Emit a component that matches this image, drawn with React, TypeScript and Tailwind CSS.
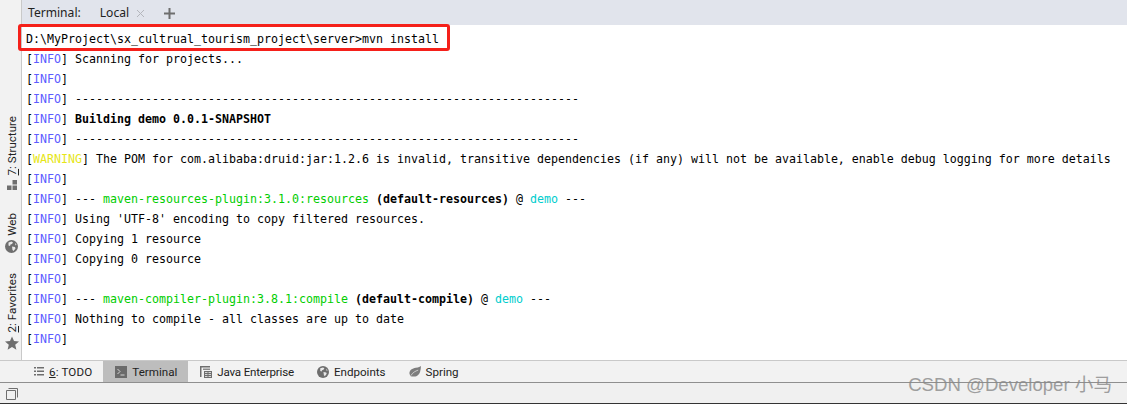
const mono = "font-['DejaVu_Sans_Mono',monospace] text-[11.63px]";
const head = "font-['Noto_Sans',sans-serif] text-[12.1px] text-[#222]";
const ui = "font-['Roboto',sans-serif] text-[11.6px] text-[#222]";

const Info = () => (
  <>
    <span className="text-black">[</span>
    <span className="text-[#5c5cff]">INFO</span>
    <span className="text-black">]</span>
  </>
);

const rule = '-'.repeat(72);

const lines: React.ReactNode[] = [
  <> Scanning for projects...</>,
  null,
  <> {rule}</>,
  <b> Building demo 0.0.1-SNAPSHOT</b>,
  <> {rule}</>,
  'warning',
  null,
  <>
    {' --- '}
    <span className="text-[#00cd00]">maven-resources-plugin:3.1.0:resources</span>
    {' '}
    <b>(default-resources)</b>
    {' @ '}
    <span className="text-[#00cdcd]">demo</span>
    {' ---'}
  </>,
  <> Using 'UTF-8' encoding to copy filtered resources.</>,
  <> Copying 1 resource</>,
  <> Copying 0 resource</>,
  null,
  <>
    {' --- '}
    <span className="text-[#00cd00]">maven-compiler-plugin:3.8.1:compile</span>
    {' '}
    <b>(default-compile)</b>
    {' @ '}
    <span className="text-[#00cdcd]">demo</span>
    {' ---'}
  </>,
  <> Nothing to compile - all classes are up to date</>,
  null,
];

function SideTab({ label, accel, icon, className = '' }: { label: string; accel: string; icon: React.ReactNode; className?: string }) {
  return (
    <div className={`flex flex-col-reverse items-center gap-[4px] ${className}`}>
      {icon}
      <span className={`${ui} [writing-mode:vertical-rl] rotate-180 leading-[14px] whitespace-nowrap`}>
        {accel && <span className="underline">{accel}</span>}
        {label}
      </span>
    </div>
  );
}

function StarIcon() {
  return (
    <svg width="14" height="14" viewBox="0 0 14 14" fill="#6e6e6e">
      <path d="M7 .5l2 4.6 5 .4-3.8 3.3 1.2 4.9L7 11.1l-4.4 2.6 1.2-4.9L0 5.5l5-.4z" />
    </svg>
  );
}

function GlobeIcon({ size }: { size: number }) {
  return (
    <svg width={size} height={size} viewBox="0 0 13 13">
      <circle cx="6.5" cy="6.5" r="6.5" fill="#6e6e6e" />
      <path d="M3.5 2.5l3-1 1.5 1-1 1.5-1.5.5-.5 1.5-1.5-.5zM7 6.5l3 .5.5 1.5-2 2.5-1-1zM10 3l1.5 1.5-1 1z" fill="#e8e8e8" />
    </svg>
  );
}

function StructureIcon() {
  return (
    <svg width="10" height="10" viewBox="0 0 10 10" fill="#6e6e6e">
      <rect x="5.5" y="0" width="4.5" height="4.5" />
      <rect x="0" y="5.5" width="4.5" height="4.5" />
      <rect x="5.5" y="5.5" width="4.5" height="4.5" />
    </svg>
  );
}

function TodoIcon() {
  return (
    <svg width="10" height="9" viewBox="0 0 10 9" fill="#6e6e6e">
      <rect x="0" y="0" width="2" height="1.5" />
      <rect x="3" y="0" width="7" height="1.5" />
      <rect x="0" y="3.5" width="2" height="1.5" />
      <rect x="3" y="3.5" width="7" height="1.5" />
      <rect x="0" y="7" width="2" height="1.5" />
      <rect x="3" y="7" width="7" height="1.5" />
    </svg>
  );
}

function TerminalIcon() {
  return (
    <svg width="12" height="12" viewBox="0 0 12 12">
      <rect width="12" height="12" fill="#6b6b6b" />
      <path d="M2.5 3l2.5 2.5L2.5 8" fill="none" stroke="#d5d5d5" />
      <path d="M5.5 9h4" stroke="#d5d5d5" />
    </svg>
  );
}

function JavaEEIcon() {
  return (
    <svg width="12" height="12" viewBox="0 0 12 12">
      <path d="M0 0h10v1.5H1.5V11H0z" fill="#6e6e6e" />
      <rect x="3" y="2.5" width="7" height="1.5" fill="#8a8a8a" />
      <rect x="4" y="5" width="8" height="7" fill="#6e6e6e" />
      <path d="M5 6.5h2.5M5 8.5h2.5M5 10.5h2.5M8.5 6.5h2.5M8.5 8.5h2.5M8.5 10.5h2.5" stroke="#f2f2f2" strokeWidth="0.8" />
    </svg>
  );
}

function SpringIcon() {
  return (
    <svg width="12" height="11" viewBox="0 0 13 12">
      <path d="M13 0c-1 1-2.5 1.5-5.5 1.8C3 2.3 0 5 .5 8.5c.2 1 .7 2 1.3 2.6C4 11.8 10 12.5 12 6.5 12.6 4.5 13 2 13 0z" fill="#7d7d7d" />
      <path d="M2 10.5C4 7 7 5.5 10 4.5" stroke="#f2f2f2" strokeWidth="0.7" fill="none" />
    </svg>
  );
}

function BottomTab({ icon, active, className = '', children }: { icon: React.ReactNode; active?: boolean; className?: string; children: React.ReactNode }) {
  return (
    <div className={`h-full flex items-center gap-[5px] pl-[12px] pr-[11px] ${active ? 'bg-[#bdbdbd]' : ''}`}>
      {icon}
      <span className={`${ui} pt-[3px] ${className}`}>{children}</span>
    </div>
  );
}

export default function App() {
  return (
    <div className="relative w-[1127px] h-[404px] overflow-hidden bg-white flex flex-col">
      <div className="flex-1 min-h-0 flex">
        {/* Left tool rail */}
        <div className="w-[22px] shrink-0 bg-[#f2f2f2] border-r border-[#c9c9c9] flex flex-col-reverse items-center pl-[2px] pb-[10px] gap-[20px]">
          <SideTab label=": Favorites" accel="2" icon={<StarIcon />} />
          <SideTab label="Web" accel="" icon={<GlobeIcon size={13} />} />
          <SideTab label=": Structure" accel="7" icon={<StructureIcon />} className="mb-[3px]" />
        </div>

        <div className="flex-1 min-w-0 flex flex-col">
          {/* Terminal header */}
          <div className="h-[25px] shrink-0 bg-[#e1e4ec] flex items-center pl-[6px] pt-[1px]">
            <span className={head}>Terminal:</span>
            <span className={`${head} ml-[19px]`}>Local</span>
            <svg className="ml-[7px]" width="9" height="9" viewBox="0 0 9 9" stroke="#b4b6bc" fill="none">
              <path d="M1 1l7 7M8 1l-7 7" />
            </svg>
            <svg className="ml-[19px]" width="11" height="11" viewBox="0 0 11 11" stroke="#6e6e6e" strokeWidth="2" fill="none">
              <path d="M5.5 0v11M0 5.5h11" />
            </svg>
          </div>

          {/* Terminal output */}
          <div className={`flex-1 min-h-0 pl-[4px] pt-[4px] ${mono} text-black whitespace-pre leading-[20px]`}>
            <div>D:\MyProject\sx_cultrual_tourism_project\server&gt;mvn install</div>
            {lines.map((line, i) =>
              line === 'warning' ? (
                <div key={i}>
                  [<span className="text-[#e6e619]">WARNING</span>] The POM for com.alibaba:druid:jar:1.2.6 is invalid, transitive dependencies (if any) will not be available, enable debug logging for more details
                </div>
              ) : (
                <div key={i}>
                  <Info />
                  {line}
                </div>
              )
            )}
          </div>
        </div>
      </div>

      {/* Tool window bar */}
      <div className="h-[22px] shrink-0 bg-[#f2f2f2] border-t border-[#c9c9c9] flex items-center pl-[22px]">
        <BottomTab icon={<TodoIcon />} className="tracking-[0.15px]">
          <span className="underline">6</span>: TODO
        </BottomTab>
        <BottomTab active icon={<TerminalIcon />}>Terminal</BottomTab>
        <BottomTab icon={<JavaEEIcon />} className="tracking-[-0.2px]">Java Enterprise</BottomTab>
        <BottomTab icon={<GlobeIcon size={12} />}>Endpoints</BottomTab>
        <BottomTab icon={<SpringIcon />}>Spring</BottomTab>
      </div>

      {/* Status bar */}
      <div className="h-[22px] shrink-0 bg-[#f0f0f0] border-t border-[#8f8f8f] border-b border-b-[#333] flex items-center pl-[6px] pt-[1px]">
        <svg width="12" height="12" viewBox="0 0 12 12" fill="none" stroke="#6e6e6e">
          <path d="M2.5.5h9v9M.5 2.5h9v9h-9z" />
        </svg>
      </div>

      {/* Red highlight around the command */}
      <div className="absolute left-[18px] top-[24px] w-[432px] h-[27px] border-[3px] border-[#f5201a] rounded-[3px]" />

      {/* Watermark */}
      <span className="absolute right-[15px] top-[373px] text-[18.6px] leading-[24px] text-[#8a8a8a] opacity-80 font-['Liberation_Sans','Noto_Sans_CJK_SC',sans-serif]">
        CSDN @Developer 小马
      </span>
    </div>
  );
}
